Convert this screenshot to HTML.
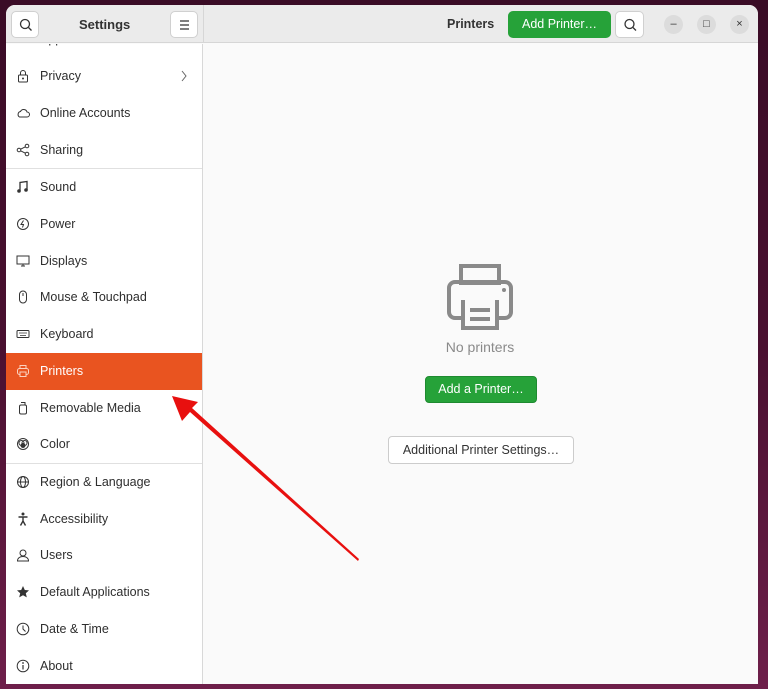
<!DOCTYPE html>
<html><head><style>
*{margin:0;padding:0;box-sizing:border-box}
body{width:768px;height:689px;overflow:hidden;background:linear-gradient(180deg,#3a0c26 0%,#4a1030 50%,#6e1f4a 100%);font-family:"Liberation Sans",sans-serif;position:relative}
.win{position:absolute;left:6px;top:5px;width:752px;height:679px;background:#fafafa;border-radius:9px 9px 0 0;overflow:hidden}
.hdr{position:absolute;left:0;top:0;width:752px;height:38px;background:#ebebeb;border-bottom:1px solid #d6d6d6;z-index:2}
.side{position:absolute;left:0;top:39px;width:197px;height:640px;background:#fff;border-right:1px solid #d8d8d8;overflow:hidden}
.inner{position:absolute;left:0;top:-4px;width:197px;height:660px}
.vsep{position:absolute;left:197px;top:0;width:1px;height:38px;background:#d6d6d6}
.btn{position:absolute;background:#fff;border:1px solid #d0d0d0;border-radius:5px}
.row{position:absolute;left:0;width:197px;height:37px;font-size:12.5px;color:#2e2e2e}
.row span{position:absolute;left:34px;top:11px}
.row svg{position:absolute;left:10px;top:11px}
.sel{background:#e95420;color:#fff}
.hsep{position:absolute;left:0;width:197px;height:1px;background:#e0e0e0}
.wc{position:absolute;top:10px;width:19px;height:19px;border-radius:50%;background:#dcdcdc;font-size:11px;color:#333;text-align:center;line-height:19px}
</style></head><body>
<div class="win">
<div class="hdr">
 <div class="btn" style="left:5px;top:6px;width:28px;height:27px"><svg width="28" height="27"><circle cx="13" cy="12" r="4.5" fill="none" stroke="#333" stroke-width="1.3"/><path d="M16.5 15.5l3 3" stroke="#333" stroke-width="1.3"/></svg></div>
 <div style="position:absolute;left:73px;top:12px;font-size:13px;font-weight:bold;color:#333">Settings</div>
 <div class="btn" style="left:164px;top:6px;width:28px;height:27px"><svg width="28" height="27"><path d="M9 9h9M9 13h9M9 17h9" stroke="#333" stroke-width="1.2"/></svg></div>
 <div class="vsep"></div>
 <div style="position:absolute;left:441px;top:12px;font-size:12.5px;font-weight:bold;color:#333">Printers</div>
 <div style="position:absolute;left:502px;top:6px;width:103px;height:27px;background:#26a239;border-radius:5px;color:#fff;font-size:12.5px;text-align:center;line-height:27px">Add Printer…</div>
 <div class="btn" style="left:609px;top:6px;width:29px;height:27px"><svg width="29" height="27"><circle cx="13.5" cy="12" r="4.5" fill="none" stroke="#333" stroke-width="1.3"/><path d="M17 15.5l3 3" stroke="#333" stroke-width="1.3"/></svg></div>
 <div class="wc" style="left:658px">–</div>
 <div class="wc" style="left:691px">□</div>
 <div class="wc" style="left:724px">×</div>
</div>
<div class="side"><div class="inner">
 <div class="row" style="top:-19px"><span>Apps</span></div>
 <div class="row" style="top:18px"><svg width="14" height="14"><rect x="2.5" y="6" width="9" height="7" rx="1" fill="none" stroke="#333"/><path d="M4.5 6V4a2.5 2.5 0 015 0v2" fill="none" stroke="#333"/><circle cx="7" cy="9.5" r="1" fill="#333"/></svg><span>Privacy</span><svg style="left:174px" width="8" height="14"><path d="M2 2l4 5-4 5" fill="none" stroke="#666"/></svg></div>
 <div class="row" style="top:55px"><svg width="14" height="14"><path d="M3.5 11h7.5a2.5 2.5 0 000-5 3.5 3.5 0 00-6.5-.5A3 3 0 003.5 11z" fill="none" stroke="#333"/></svg><span>Online Accounts</span></div>
 <div class="row" style="top:92px"><svg width="14" height="14"><circle cx="3" cy="7" r="1.8" fill="none" stroke="#333"/><circle cx="11" cy="3" r="1.8" fill="none" stroke="#333"/><circle cx="11" cy="11" r="1.8" fill="none" stroke="#333"/><path d="M4.6 6.2l4.8-2.4M4.6 7.8l4.8 2.4" stroke="#333"/></svg><span>Sharing</span></div>
 <div class="hsep" style="top:128px"></div>
 <div class="row" style="top:129px"><svg width="14" height="14"><path d="M4 11V2.5l7-1V10" fill="none" stroke="#333" stroke-width="1.3"/><circle cx="3" cy="11" r="1.8" fill="#333"/><circle cx="10" cy="10" r="1.8" fill="#333"/></svg><span>Sound</span></div>
 <div class="row" style="top:166px"><svg width="14" height="14"><circle cx="7" cy="7" r="5.5" fill="none" stroke="#333"/><path d="M7.5 3.5L5 7.5h2.5L6.5 10.5" fill="none" stroke="#333"/></svg><span>Power</span></div>
 <div class="row" style="top:203px"><svg width="14" height="14"><rect x="1" y="2" width="12" height="8" fill="none" stroke="#333"/><path d="M5 12h4M7 10v2" stroke="#333"/></svg><span>Displays</span></div>
 <div class="row" style="top:239px"><svg width="14" height="14"><rect x="3.5" y="1" width="7" height="12" rx="3.5" fill="none" stroke="#333"/><path d="M7 3v3" stroke="#333"/></svg><span>Mouse &amp; Touchpad</span></div>
 <div class="row" style="top:276px"><svg width="14" height="14"><rect x="1" y="3.5" width="12" height="7" rx="1" fill="none" stroke="#333"/><path d="M3 6h8M4 8.5h6" stroke="#333" stroke-width=".8"/></svg><span>Keyboard</span></div>
 <div class="row sel" style="top:313px"><svg width="14" height="14"><rect x="1.5" y="4.5" width="11" height="6" rx="2" fill="none" stroke="#fbd2c0"/><rect x="4" y="1.5" width="6" height="3" fill="none" stroke="#fbd2c0"/><rect x="4" y="8" width="6" height="4.5" fill="#e95420" stroke="#fbd2c0"/></svg><span>Printers</span></div>
 <div class="row" style="top:350px"><svg width="14" height="14"><rect x="3.5" y="4" width="7" height="9" rx="1.5" fill="none" stroke="#333"/><path d="M5 1.5h4v2.5" fill="none" stroke="#333"/></svg><span>Removable Media</span></div>
 <div class="row" style="top:386px"><svg width="14" height="14"><circle cx="7" cy="7" r="5.5" fill="none" stroke="#333"/><circle cx="5.5" cy="6" r="2.5" fill="none" stroke="#333"/><circle cx="8.5" cy="6" r="2.5" fill="none" stroke="#333"/><circle cx="7" cy="8.5" r="2.5" fill="#333"/></svg><span>Color</span></div>
 <div class="hsep" style="top:423px"></div>
 <div class="row" style="top:424px"><svg width="14" height="14"><circle cx="7" cy="7" r="5.5" fill="none" stroke="#333"/><ellipse cx="7" cy="7" rx="2.5" ry="5.5" fill="none" stroke="#333"/><path d="M1.5 7h11" stroke="#333"/></svg><span>Region &amp; Language</span></div>
 <div class="row" style="top:461px"><svg width="14" height="14"><circle cx="7" cy="2" r="1.5" fill="#333"/><path d="M2.5 5h9M7 5v4M7 9l-2.5 4.5M7 9l2.5 4.5" stroke="#333" stroke-width="1.4" fill="none"/></svg><span>Accessibility</span></div>
 <div class="row" style="top:497px"><svg width="14" height="14"><circle cx="7" cy="5" r="3" fill="none" stroke="#333"/><path d="M1.5 13c0-3 2.5-4.5 5.5-4.5s5.5 1.5 5.5 4.5z" fill="none" stroke="#333"/></svg><span>Users</span></div>
 <div class="row" style="top:534px"><svg width="14" height="14"><path d="M7 1l1.8 4 4.2.4-3.2 2.8 1 4.2L7 10.2 3.2 12.4l1-4.2L1 5.4l4.2-.4z" fill="#333"/></svg><span>Default Applications</span></div>
 <div class="row" style="top:571px"><svg width="14" height="14"><circle cx="7" cy="7" r="5.8" fill="none" stroke="#333"/><path d="M7 3.5V7l2.5 2.5" fill="none" stroke="#333"/></svg><span>Date &amp; Time</span></div>
 <div class="row" style="top:608px"><svg width="14" height="14"><circle cx="7" cy="7" r="5.8" fill="none" stroke="#333"/><path d="M7 6v4.5" stroke="#333" stroke-width="1.2"/><circle cx="7" cy="4" r=".9" fill="#333"/></svg><span>About</span></div>
</div></div>
<svg style="position:absolute;left:440px;top:259px" width="70" height="70"><rect x="15" y="2" width="38" height="17" fill="none" stroke="#8a8a8a" stroke-width="4"/><path d="M16 54H9a6 6 0 01-6-6V24a6 6 0 016-6h50a6 6 0 016 6v24a6 6 0 01-6 6h-7" fill="none" stroke="#8a8a8a" stroke-width="4"/><circle cx="58" cy="26" r="2" fill="#8a8a8a"/><path d="M17 36v28h34V36" fill="none" stroke="#8a8a8a" stroke-width="4"/><path d="M24 46h20M24 55h20" stroke="#8a8a8a" stroke-width="4"/></svg>
<div style="position:absolute;left:374px;top:334px;width:200px;text-align:center;font-size:14px;color:#8a8a8a">No printers</div>
<div style="position:absolute;left:419px;top:371px;width:112px;height:27px;background:#26a239;border:1px solid #1e8a30;border-radius:4px;color:#fff;font-size:12.5px;text-align:center;line-height:25px">Add a Printer…</div>
<div style="position:absolute;left:382px;top:431px;width:186px;height:28px;background:#fff;border:1px solid #ccc;border-radius:4px;color:#333;font-size:12.5px;text-align:center;line-height:26px">Additional Printer Settings…</div>
</div>
<svg style="position:absolute;left:0;top:0" width="768" height="689"><path d="M358 561L190 412l-8 9-10-25 26 6-6 6L359 559z" fill="#e8100f"/></svg>
</body></html>
